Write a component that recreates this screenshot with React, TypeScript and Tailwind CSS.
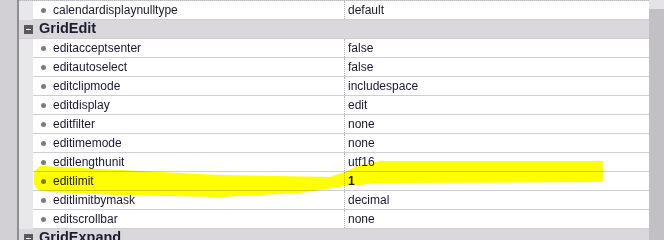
const rows: Array<{ cat?: string; name?: string; value?: string; bold?: boolean }> = [
  { name: "calendardisplaynulltype", value: "default" },
  { cat: "GridEdit" },
  { name: "editacceptsenter", value: "false" },
  { name: "editautoselect", value: "false" },
  { name: "editclipmode", value: "includespace" },
  { name: "editdisplay", value: "edit" },
  { name: "editfilter", value: "none" },
  { name: "editimemode", value: "none" },
  { name: "editlengthunit", value: "utf16" },
  { name: "editlimit", value: "1", bold: true },
  { name: "editlimitbymask", value: "decimal" },
  { name: "editscrollbar", value: "none" },
  { cat: "GridExpand" },
];

const MinusBox = () => (
  <div className="w-[9px] h-[9px] bg-[#5a5a5a] flex items-center justify-center">
    <div className="w-[5px] h-[1px] bg-white" />
  </div>
);

const PropRow = ({ name, value, bold }: { name: string; value: string; bold?: boolean }) => (
  <div className="flex h-[19px]">
    <div className="w-[14px] shrink-0 bg-[#e8e7ea]" />
    <div className="flex flex-1 min-w-0 border-b border-[#cfcfd2] bg-white">
      <div className="w-[312px] shrink-0 flex items-center pl-[8px] border-r border-dotted border-[#b4b4b8]">
        <span className="w-[5px] h-[5px] rounded-full bg-[#7c7c7c] mr-[7px]" />
        <span>{name}</span>
      </div>
      <div className={`flex items-center pl-[3px] ${bold ? "font-bold" : ""}`}>{value}</div>
    </div>
  </div>
);

const CatRow = ({ name }: { name: string }) => (
  <div className="flex items-center h-[19px] bg-[#dad8dc] border-b border-[#cfcfd2] pl-[5px]">
    <MinusBox />
    <span className="ml-[6px] font-bold text-[14.5px] text-[#1c1c30]">{name}</span>
  </div>
);

export default function App() {
  return (
    <div
      className="relative w-[664px] h-[240px] overflow-hidden grid grid-cols-[17px_2px_630px_15px] bg-[#d3d1d5] text-[12px] text-[#181830]"
      style={{ fontFamily: '"Liberation Sans", Arial, sans-serif' }}
    >
      <div className="bg-[#d2d0d4]" />
      <div className="bg-[#8e8e92]" />
      <div className="flex flex-col border-t border-dotted border-[#b8b8bc]">
        {rows.map((r, i) =>
          r.cat ? <CatRow key={i} name={r.cat} /> : <PropRow key={i} name={r.name!} value={r.value!} bold={r.bold} />
        )}
      </div>
      <div className="flex flex-col bg-[#c2c0c4]">
        <div className="h-[9px] bg-[#e4e3e6]" />
      </div>
      <svg
        className="absolute inset-0 pointer-events-none mix-blend-multiply"
        width="664"
        height="240"
        viewBox="0 0 664 240"
      >
        <polygon
          fill="#ffff00"
          points="40,166 100,169 220,175 330,177 345,172 360,165 380,161 603,161 603,182 380,183 345,186 300,193 220,197 120,195 50,192 38,190 34,184 34,172"
        />
      </svg>
    </div>
  );
}
